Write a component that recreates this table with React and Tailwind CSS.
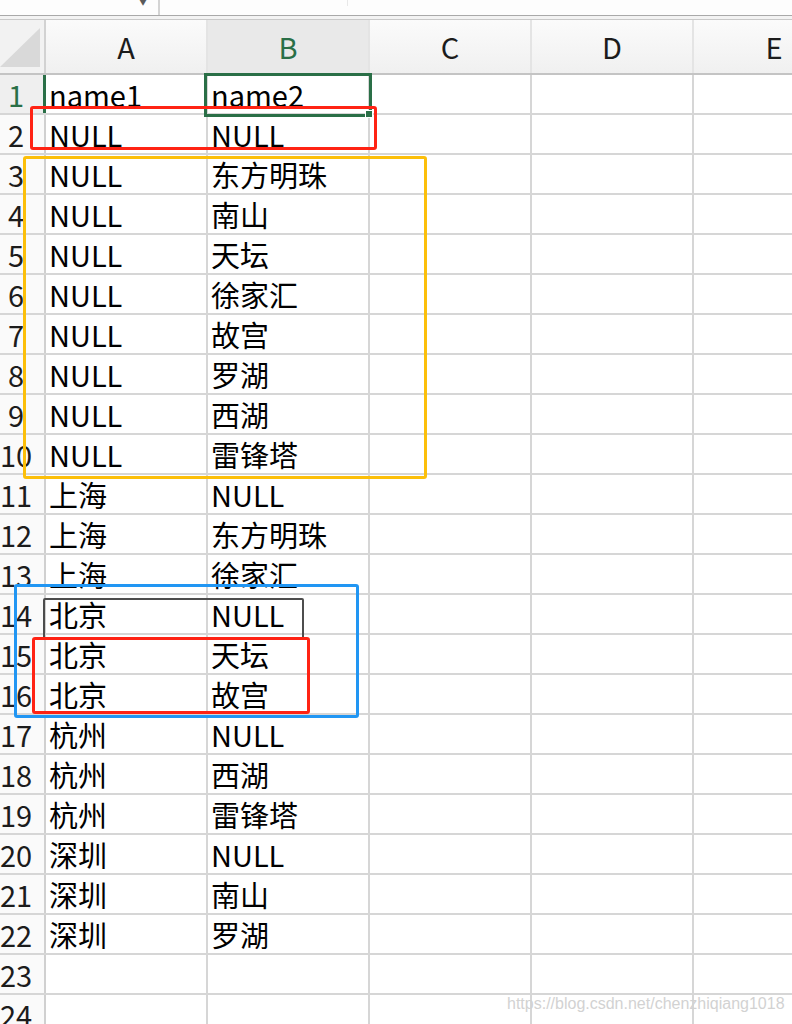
import React from "react";

const columns = ["A", "B", "C", "D", "E"];

const rows = [
  ["name1", "name2"],
  ["NULL", "NULL"],
  ["NULL", "东方明珠"],
  ["NULL", "南山"],
  ["NULL", "天坛"],
  ["NULL", "徐家汇"],
  ["NULL", "故宫"],
  ["NULL", "罗湖"],
  ["NULL", "西湖"],
  ["NULL", "雷锋塔"],
  ["上海", "NULL"],
  ["上海", "东方明珠"],
  ["上海", "徐家汇"],
  ["北京", "NULL"],
  ["北京", "天坛"],
  ["北京", "故宫"],
  ["杭州", "NULL"],
  ["杭州", "西湖"],
  ["杭州", "雷锋塔"],
  ["深圳", "NULL"],
  ["深圳", "南山"],
  ["深圳", "罗湖"],
  ["", ""],
  ["", ""]
];

// annotation frames drawn over the sheet
const marks = [
  "left-[14px] top-[584px] h-[134px] w-[345px] rounded-[3px] border-[3px] border-[#2196f3]",
  "left-[43px] top-[598px] h-[42px] w-[261px] rounded-[2px] border-2 border-[#4d4d4d]",
  "left-[32px] top-[637px] h-[77px] w-[278px] rounded-[3px] border-[3px] border-[#ff2314]",
  "left-[23px] top-[156px] h-[323px] w-[404px] rounded-[3px] border-[3px] border-[#fcbf0a]",
  "left-[204px] top-[73px] h-[44px] w-[168px] border-[3px] border-[#2a6f47]",
  "left-[30px] top-[106px] h-[44px] w-[347px] rounded-[3px] border-[3px] border-[#ff2314]"
];

const FormulaBar = () => (
  <div className="flex h-[15px] items-start bg-[#fdfdfd]">
    <span className="ml-[137px] mt-[-6px] w-[21px] text-[12px] leading-none text-[#5a5a5a]">▼</span>
    <div className="h-[15px] w-[2px] bg-[#d4d4d4]" />
    <div className="ml-[187px] h-[6px] w-px bg-[#e8e8e8]" />
  </div>
);

const HeaderRow = () => (
  <div className="flex h-[55px] border-b-2 border-[#c4c4c4] bg-linear-to-b from-[#fbfbfb] to-[#f0f0f0]">
    <div className="w-[46px] shrink-0 border-r-2 border-[#d2d2d2] bg-[#f2f2f2]">
      <svg width="44" height="53" viewBox="0 0 44 53">
        <polygon points="40,8 40,47 0,47" fill="#d9d9d9" />
      </svg>
    </div>
    {columns.map((col) => (
      <div
        key={col}
        className={`flex w-[162px] shrink-0 items-center justify-center border-r-2 border-[#e4e4e4] text-[29px] leading-[53px] ${
          col === "B" ? "bg-[#e9e9e9] text-[#2a6f47]" : "text-[#1c1c1c]"
        }`}
      >
        {col}
      </div>
    ))}
  </div>
);

const SheetRow = ({ index, cells }) => {
  const active = index === 0;
  return (
    <div className="flex h-[40px] border-b-2 border-[#d6d6d6]">
      <div
        className={`w-[46px] shrink-0 border-r-2 pr-[12px] text-center text-[29px] leading-[38px] ${
          active
            ? "border-[#2a6f47] bg-[#efefef] text-[#2a6f47] shadow-[inset_-1px_0_0_#2a6f47]"
            : "border-[#d0d0d0] bg-[#fafafa] text-[#1c1c1c]"
        }`}
      >
        {index + 1}
      </div>
      {columns.map((col, i) => (
        <div
          key={col}
          className="w-[162px] shrink-0 overflow-hidden whitespace-nowrap border-r-2 border-[#d6d6d6] pl-[3px] text-[29px] leading-[38px] text-black"
        >
          {cells[i] || ""}
        </div>
      ))}
    </div>
  );
};

const App = () => {
  return (
    <div className="relative h-[1024px] w-[792px] overflow-hidden bg-white font-['Noto_Sans_CJK_SC',sans-serif]">
      <FormulaBar />
      <div className="h-[5px] border-t border-b border-t-[#a9a9a9] border-b-[#c9c9c9] bg-[#f3f3f3]" />
      <HeaderRow />
      {rows.map((cells, index) => (
        <SheetRow key={index} index={index} cells={cells} />
      ))}

      {marks.map((cls) => (
        <div key={cls} className={`pointer-events-none absolute ${cls}`} />
      ))}
      <div className="pointer-events-none absolute left-[365px] top-[110px] h-[8px] w-[8px] border border-white bg-[#2a6f47]" />

      <span className="pointer-events-none absolute left-[507px] top-[994px] font-['Liberation_Sans',sans-serif] text-[16px] leading-[20px] text-[#d2d2d2]">
        https://blog.csdn.net/chenzhiqiang1018
      </span>
    </div>
  );
};

export default App;
